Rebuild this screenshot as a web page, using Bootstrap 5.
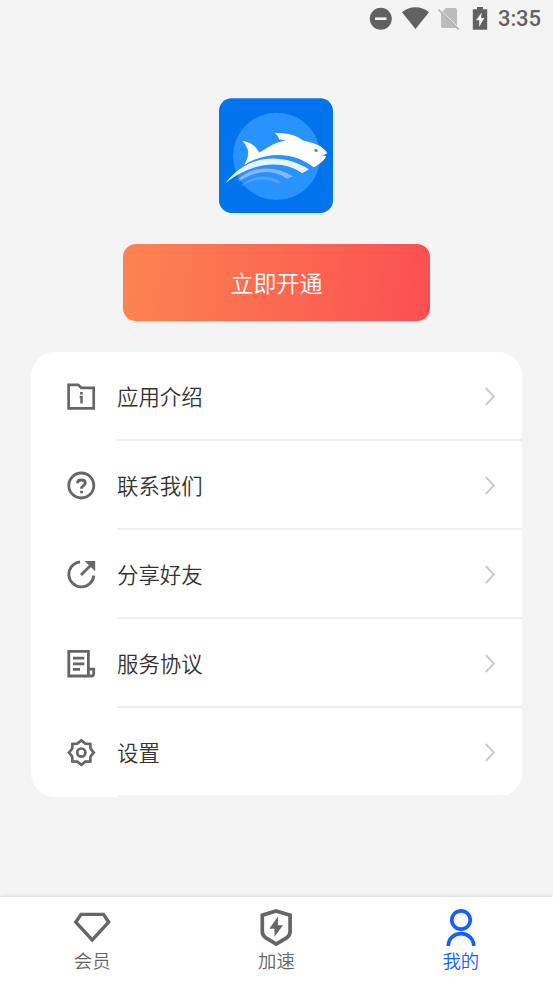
<!DOCTYPE html>
<html lang="zh-CN">
<head>
  <meta charset="UTF-8" />
  <meta name="viewport" content="width=device-width, initial-scale=1.0"/>
  <title>我的</title>
  <link href="https://cdn.jsdelivr.net/npm/bootstrap@5.3.0/dist/css/bootstrap.min.css" rel="stylesheet">
  <style>
    body {
      height: 983px;
      overflow: hidden;
      background: #f4f4f4;
      color: #333;
      font-family: "Noto Sans CJK SC", sans-serif;
      font-weight: 350;
    }
    svg {
      display: block;
      flex: none;
      overflow: visible;
    }
    .status-bar {
      height: 38px;
      padding-right: 12px;
      color: #616161;
    }
    .clock {
      width: 43px;
      margin-left: 10px;
      font: 500 22px/38px Roboto, sans-serif;
      letter-spacing: -.1px;
    }
    .app-logo {
      margin-top: 60px;
      margin-right: 1px;
    }
    .btn-open {
      width: 307px;
      height: 77px;
      margin-top: 31px;
      padding: 0 0 1px;
      border: 0;
      border-radius: 13px;
      background: linear-gradient(97deg, #fc8451, #fb4f51);
      color: #fff;
      font-size: 23px;
      font-weight: 350;
    }
    .btn-open:hover {
      color: #fff;
    }
    .menu {
      width: 491px;
      margin-top: 31px;
      border-radius: 24px;
      background: #fff;
      overflow: hidden;
    }
    .menu-row {
      height: 89px;
      padding-left: 35px;
      color: inherit;
    }
    .menu-row > svg {
      color: #666;
    }
    .menu-text {
      margin-left: 21px;
      padding: 2px 27px 0 0;
      border-bottom: 2px solid #eef1f4;
      font-size: 21.4px;
    }
    .menu-row:last-child .menu-text {
      border-bottom-color: #f3f5f7;
    }
    .menu-text svg {
      color: #c8cbd0;
    }
    .tab-bar {
      height: 86px;
      background: #fff;
      box-shadow: 0 -1px 4px rgba(0, 0, 0, .1);
    }
    .tab-item {
      padding-top: 12px;
      color: #666;
      font-size: 18.4px;
      line-height: 27px;
    }
    .tab-item.active {
      color: #155eff;
    }
  </style>
</head>
<body class="d-flex flex-column">
  <div class="status-bar d-flex align-items-center justify-content-end">
    <svg width="24" height="24" viewBox="0 0 24 24"><circle cx="11.8" cy="11.7" r="11" fill="currentColor"/><path d="M6 11.7h11.5" stroke="#f4f4f4" stroke-width="2.6"/></svg>
    <svg class="ms-2" width="28" height="24" viewBox="-1 0 28 24"><path d="M0 5.3C8-1.3 19-1.3 27 5.3L13.5 22z" fill="currentColor"/></svg>
    <svg width="22" height="24" viewBox="0 0 22 24" style="margin-left:9px"><path d="M8 1h9q2 0 2 2v18H5q-2 0-2-2V6z" fill="#bcbcbc"/><path d="M0 1.2 22 22.6" stroke="#f4f4f4" stroke-width="1.6"/><path d="M.5 2.6 20.7 22.4" stroke="#b2b2b2" stroke-width="1.7"/></svg>
    <svg width="16" height="24" viewBox="0 0 16 24" style="margin-left:12px"><path d="M.8 2.3H5V0h6v2.3h4.2v20.5H.8z" fill="currentColor"/><path d="M9.7 5.5 4 13.3h3.2v6.5L12.3 11H9.1z" fill="#f4f4f4"/></svg>
    <div class="clock">3:35</div>
  </div>

  <svg class="app-logo align-self-center" width="114" height="115" viewBox="27 24 342 345">
    <rect x="27" y="25" width="342" height="344" rx="38" fill="#0074ec"/>
    <circle cx="200" cy="199" r="131" fill="#2892ff"/>
    <path d="M96 153c27 3 42 15 52 35 20-12 42-28 68-34l13-3c-13-1-23-1-22-5-3-8-8-13-13-17 37-1 68 7 84 22 30 8 51 14 62 25 8 5 11 11 11 15l-14 5 12 2c-5 12-20 25-38 34-58-46-137-50-208-8 12-22 15-38 7-53-4-9-8-14-14-18z" fill="#fff"/>
    <path d="M47 279c67-88 170-90 250-41-9 5-14 8-20 12-55-38-142-40-230 29z" fill="#eaf3ff"/>
    <path d="M81 270c46-44 117-44 168-10-7 1-12 3-18 6-41-29-93-26-145 9l6-8z" fill="#84b9ff"/>
    <path d="M91 290c31-34 80-39 125-13-5 0-7 1-11 4-35-18-68-17-114 9l9-8z" fill="#559fff"/>
    <path d="m312 179 6-3 5 4-1 6-7-1z" fill="#1e96df"/>
  </svg>

  <button type="button" class="btn btn-open align-self-center">立即开通</button>

  <div class="menu align-self-center">
    <a href="#" class="menu-row d-flex text-decoration-none">
      <svg class="mt-auto mb-auto" width="30" height="29" viewBox="0 0 30 29" fill="none" stroke="currentColor" stroke-width="2.7"><path d="M2.6 2.8h9.6l3 3h12.5v20.5H2.6z"/><path d="M14 11.2h2.8M13.7 15h1.8v6.5" stroke-width="2.5"/></svg>
      <div class="menu-text d-flex flex-grow-1 align-items-center justify-content-between">应用介绍<svg width="10" height="19" viewBox="0 0 10 19" fill="none" stroke="currentColor" stroke-width="1.9"><path d="m.8 1 8 8.5-8 8.5"/></svg></div>
    </a>
    <a href="#" class="menu-row d-flex text-decoration-none">
      <svg class="mt-auto mb-auto" width="30" height="29" viewBox="0 0 30 29" fill="none" stroke="currentColor" stroke-width="2.8"><circle cx="15.3" cy="14.5" r="12.5"/><path d="M11.5 12.2V12c0-2 1.6-3 3.9-3s3.9 1.1 3.9 3c0 2.8-3.8 2.5-3.8 5.8M15.5 19.8v2.5"/></svg>
      <div class="menu-text d-flex flex-grow-1 align-items-center justify-content-between">联系我们<svg width="10" height="19" viewBox="0 0 10 19" fill="none" stroke="currentColor" stroke-width="1.9"><path d="m.8 1 8 8.5-8 8.5"/></svg></div>
    </a>
    <a href="#" class="menu-row d-flex text-decoration-none">
      <svg class="mt-auto mb-auto" width="30" height="29" viewBox="0 0 30 29" fill="none" stroke="currentColor" stroke-width="2.8"><path d="M14 1.9A12.5 12.5 0 1 0 27.8 15.5M15 15.1 25 5.1"/><path d="M18.6.9h10.6v10.4z" fill="currentColor" stroke="none"/></svg>
      <div class="menu-text d-flex flex-grow-1 align-items-center justify-content-between">分享好友<svg width="10" height="19" viewBox="0 0 10 19" fill="none" stroke="currentColor" stroke-width="1.9"><path d="m.8 1 8 8.5-8 8.5"/></svg></div>
    </a>
    <a href="#" class="menu-row d-flex text-decoration-none">
      <svg class="mt-auto mb-auto" width="30" height="29" viewBox="0 0 30 29" fill="none" stroke="currentColor" stroke-width="2.8"><path d="M22.4 27V2.4H2.8V27h22.3q2.6 0 2.6-2.6v-4.2h-5.3M7 9.2h11.3M7 14.8h11.3M7 20.4h7"/></svg>
      <div class="menu-text d-flex flex-grow-1 align-items-center justify-content-between">服务协议<svg width="10" height="19" viewBox="0 0 10 19" fill="none" stroke="currentColor" stroke-width="1.9"><path d="m.8 1 8 8.5-8 8.5"/></svg></div>
    </a>
    <a href="#" class="menu-row d-flex text-decoration-none">
      <svg class="mt-auto mb-auto" width="30" height="29" viewBox="0 0 30 29" fill="none" stroke="currentColor" stroke-width="2.7"><path d="m15.3 2.4 4 3.2 5 .3.2 4.7 3.2 4-3.2 4-.2 4.9-5 .2-4 3.1-4-3.1-4.9-.2-.2-4.9-3.2-4 3.2-4 .2-4.7 4.9-.3z"/><circle cx="15.3" cy="14.6" r="4.1"/></svg>
      <div class="menu-text d-flex flex-grow-1 align-items-center justify-content-between">设置<svg width="10" height="19" viewBox="0 0 10 19" fill="none" stroke="currentColor" stroke-width="1.9"><path d="m.8 1 8 8.5-8 8.5"/></svg></div>
    </a>
  </div>

  <nav class="tab-bar row g-0 mt-auto">
    <a href="#" class="tab-item col d-flex flex-column align-items-center text-decoration-none">
      <svg width="38" height="38" viewBox="0 0 38 38" fill="none" stroke="currentColor" stroke-width="3.4"><path d="M8 5.4h22.5l5.2 7.8L19.2 31 2.8 13.2z"/></svg>
      会员
    </a>
    <a href="#" class="tab-item col d-flex flex-column align-items-center text-decoration-none">
      <svg width="38" height="38" viewBox="0 0 38 38" fill="none" stroke="currentColor" stroke-width="3.7"><path d="M19.2 2 33.1 6.2v16.3q0 3.5-3.2 6.2l-10.7 6.5-10.7-6.5q-3.2-2.7-3.2-6.2V6.2z"/><path d="M20.9 7.5 12.3 19.8h5.2v7.9L26 16.3h-5.1z" fill="currentColor" stroke="none"/></svg>
      加速
    </a>
    <a href="#" class="tab-item active col d-flex flex-column align-items-center text-decoration-none">
      <svg width="38" height="38" viewBox="0 0 38 38" fill="none" stroke="currentColor" stroke-width="3.7"><circle cx="19" cy="11" r="9.2"/><path d="M6.3 37c0-7.5 5.5-12.3 12.7-12.3S31.7 29.5 31.7 37"/></svg>
      我的
    </a>
  </nav>
  <script src="https://cdn.jsdelivr.net/npm/bootstrap@5.3.0/dist/js/bootstrap.bundle.min.js"></script>
</body>
</html>
